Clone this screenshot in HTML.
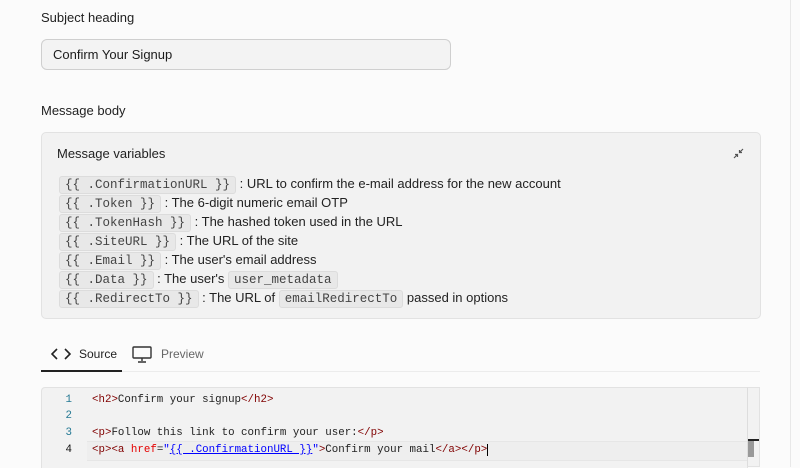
<!DOCTYPE html>
<html><head><style>
body{margin:0;width:800px;height:467px;overflow:hidden;background:#fbfbfb;font-family:"Liberation Sans",sans-serif;color:#1c1c1c;position:relative}
.lbl{position:absolute;left:41px;font-size:13px;color:#222}
.inp{position:absolute;left:41px;top:39px;height:29px;border:1px solid #cfcfcf;border-radius:6px;background:#f3f3f3;font-size:13px;line-height:29px;padding-left:11px;box-sizing:content-box;width:397px}
.vars{position:absolute;left:41px;top:132px;width:718px;height:185px;border:1px solid #e2e2e2;border-radius:5px;background:#f2f2f2}
.vars h4{margin:0;position:absolute;left:15px;top:13px;font-size:13px;font-weight:normal;color:#222}
.rows{position:absolute;left:17px;top:41px;font-size:13px;color:#222}
.r{height:19px;line-height:19px;white-space:nowrap}
code{font-family:"Liberation Mono",monospace;font-size:12.5px;background:#e8e8e8;border:1px solid #dcdcdc;border-radius:3px;padding:0 5px;color:#444;display:inline-block;line-height:16px}
.tabs{position:absolute;left:41px;top:340px;width:719px;height:31px;border-bottom:1px solid #ececec}
.tab{position:absolute;top:0;font-size:12px;height:30px;line-height:28px}
.ed{position:absolute;left:41px;top:387px;width:705px;height:80px;background:#f2f2f2;border:1px solid #e2e2e2;border-bottom:none;border-radius:4px 0 0 0;font-family:"Liberation Mono",monospace;font-size:10.8px}
.ln{position:absolute;left:0;width:30px;text-align:right;color:#237893}
.cl{position:absolute;left:50px;white-space:pre;color:#222}
.t{color:#800000}.a{color:#e50000}.s{color:#0000ff}
.sb{position:absolute;left:747px;top:387px;width:13px;height:80px;background:#f2f2f2;border:1px solid #e2e2e2;border-left:1px solid #ddd;box-sizing:border-box}
</style></head><body>
<div class="lbl" style="top:10px">Subject heading</div>
<div class="inp">Confirm Your Signup</div>
<div class="lbl" style="top:103px">Message body</div>
<div class="vars"><h4>Message variables</h4>
<svg style="position:absolute;right:16px;top:15px" width="11" height="11" viewBox="0 0 11 11" stroke="#555" stroke-width="1.2" fill="none"><path d="M1 10L4.5 6.5M2 6.5h2.5V9M10 1L6.5 4.5M6.5 2v2.5H9"/></svg>
<div class="rows">
<div class="r"><code>{{ .ConfirmationURL }}</code> : URL to confirm the e-mail address for the new account</div>
<div class="r"><code>{{ .Token }}</code> : The 6-digit numeric email OTP</div>
<div class="r"><code>{{ .TokenHash }}</code> : The hashed token used in the URL</div>
<div class="r"><code>{{ .SiteURL }}</code> : The URL of the site</div>
<div class="r"><code>{{ .Email }}</code> : The user's email address</div>
<div class="r"><code>{{ .Data }}</code> : The user's <code>user_metadata</code></div>
<div class="r"><code>{{ .RedirectTo }}</code> : The URL of <code>emailRedirectTo</code> passed in options</div>
</div></div>
<div class="tabs">
<div class="tab" style="left:0;width:81px;border-bottom:2px solid #222;color:#222"><svg style="position:absolute;left:10px;top:8px" width="20" height="12" viewBox="0 0 20 12" stroke="#222" stroke-width="1.6" fill="none"><path d="M6 1L1 6l5 5M14 1l5 5-5 5"/></svg><span style="position:absolute;left:38px">Source</span></div>
<div class="tab" style="left:91px;color:#666"><svg style="position:absolute;left:0;top:6px" width="20" height="17" viewBox="0 0 20 17" stroke="#333" stroke-width="1.4" fill="none"><rect x="1" y="1" width="18" height="11" rx="1"/><path d="M10 12v3M6 16h8"/></svg><span style="position:absolute;left:29px;white-space:nowrap">Preview</span></div>
</div>
<div class="ed">
<div class="ln" style="top:6px">1</div><div class="cl" style="top:6px"><span class="t">&lt;h2&gt;</span>Confirm your signup<span class="t">&lt;/h2&gt;</span></div>
<div class="ln" style="top:22px">2</div>
<div class="ln" style="top:39px">3</div><div class="cl" style="top:39px"><span class="t">&lt;p&gt;</span>Follow this link to confirm your user:<span class="t">&lt;/p&gt;</span></div>
<div style="position:absolute;left:45px;top:53px;width:660px;height:18px;background:#eeeeee;border-top:1px solid #e6e6e6;border-bottom:1px solid #e6e6e6"></div>
<div class="ln" style="top:56px;color:#111">4</div><div class="cl" style="top:56px"><span class="t">&lt;p&gt;&lt;a</span> <span class="a">href</span>=<span class="s">"<u>{{ .ConfirmationURL }}</u>"</span><span class="t">&gt;</span>Confirm your mail<span class="t">&lt;/a&gt;&lt;/p&gt;</span><span style="border-left:1.5px solid #000"></span></div>
</div>
<div class="sb"><div style="position:absolute;left:0;top:51px;width:11px;height:2px;background:#222"></div><div style="position:absolute;left:0;top:53px;width:6px;height:16px;background:#999"></div></div>
<div style="position:absolute;left:790px;top:0;width:1px;height:467px;background:#e8e8e8"></div>
</body></html>
